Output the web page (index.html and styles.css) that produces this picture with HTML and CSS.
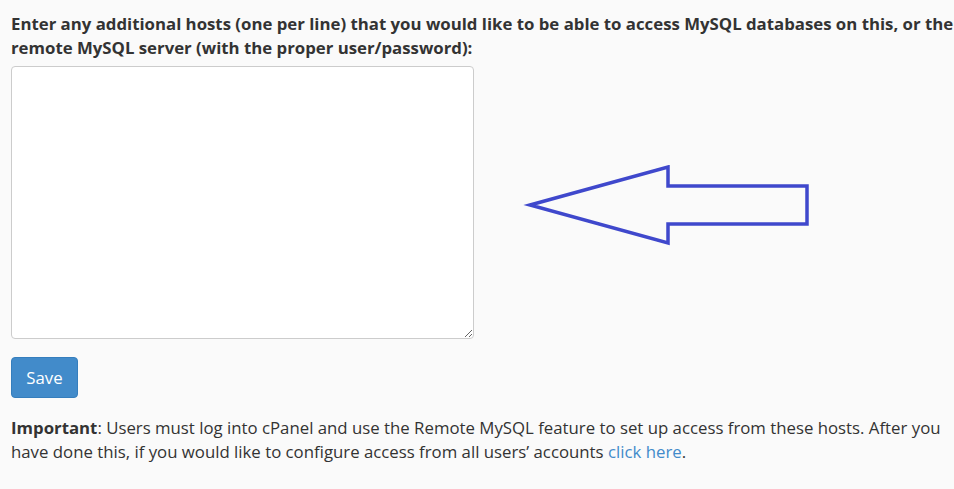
FILE: index.html
```html
<!DOCTYPE html>
<html lang="en">
<head>
    <meta charset="UTF-8">
    <title>Additional Access Hosts</title>
    <link rel="stylesheet" href="styles.css">
</head>
<body>

    <div class="container">
        <form id="hosts-form">
            <label class="hosts-label" for="hosts">Enter any additional hosts (one per line) that you would like to be able to access MySQL databases on this, or the remote MySQL server (with the proper user/password):</label>
            <textarea id="hosts" class="hosts-input"></textarea>
            <button type="submit" class="btn-save">Save</button>
        </form>

        <p class="note"><strong>Important</strong>: Users must log into cPanel and use the Remote MySQL feature to set up access from these hosts. After you have done this, if you would like to configure access from all users’ accounts <a href="#">click here</a>.</p>

        <svg class="pointer-arrow" width="300" height="100" viewBox="0 0 300 100">
            <polygon points="12,40 150,2 150,21 289,21 289,59 150,59 150,78" fill="none" stroke="#3f48cc" stroke-width="3.5" stroke-linejoin="miter"/>
        </svg>
    </div>

</body>
</html>
```

FILE: styles.css
```css
html, body {
    overflow: hidden;
}
body {
    font-family: "Open Sans", "DejaVu Sans", sans-serif;
    font-size: 16.8px;
    line-height: 24px;
    color: #333;
    background-color: #fafafa;
    margin: 0;
    padding: 12px 0 0 11px;
}
.container {
    position: relative;
    width: 965px;
}
.hosts-label {
    display: block;
    font-weight: bold;
    margin-bottom: 6px;
}
.hosts-input {
    display: block;
    width: 463px;
    height: 273px;
    box-sizing: border-box;
    background: white;
    border: 1px solid #ccc;
    border-radius: 4px;
    margin: 0 0 18px 0;
    padding: 6px 12px;
    font-family: inherit;
    font-size: 14px;
}
.btn-save {
    display: block;
    width: 67px;
    height: 41px;
    box-sizing: border-box;
    background-color: #428bca;
    color: white;
    border: 1px solid #357ebd;
    border-radius: 4px;
    font-family: inherit;
    font-size: 16.8px;
    padding: 0;
    cursor: pointer;
}
.btn-save:hover {
    background-color: #3071a9;
}
.note {
    margin: 18px 0 0 0;
}
.note a {
    color: #428bca;
    text-decoration: none;
}
.pointer-arrow {
    position: absolute;
    left: 507px;
    top: 153px;
}
```
